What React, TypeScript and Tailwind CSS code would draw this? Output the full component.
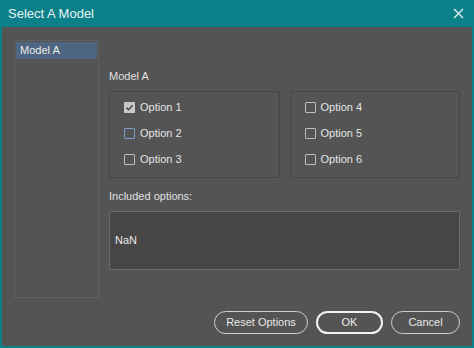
const options = [
  ["Option 1", "Option 2", "Option 3"],
  ["Option 4", "Option 5", "Option 6"],
];

const CheckBox = ({ checked, focused }: { checked?: boolean; focused?: boolean }) => {
  if (checked) {
    return (
      <span className="flex h-[11px] w-[11px] items-center justify-center rounded-[1px] bg-[#c9c9c9]">
        <svg width="9" height="9" viewBox="0 0 9 9">
          <path d="M1.5 4.6 L3.6 6.7 L7.6 2.2" fill="none" stroke="#4a4a4a" strokeWidth="1.6" />
        </svg>
      </span>
    );
  }
  return (
    <span
      className={
        focused
          ? "h-[11px] w-[11px] rounded-[1px] border border-[#7d9ccb]"
          : "h-[11px] w-[11px] rounded-[1px] border border-[#bdbdbd]"
      }
    />
  );
};

const OptionGroup = ({ items }: { items: string[] }) => (
  <div className="flex h-[87px] flex-1 flex-col rounded-[2px] border border-[#464646] px-[14px] pt-[2px]">
    {items.map((label) => (
      <label key={label} className="flex h-[26px] items-center gap-[5px] text-[11px] text-[#e4e4e4]">
        <CheckBox checked={label === "Option 1"} focused={label === "Option 2"} />
        {label}
      </label>
    ))}
  </div>
);

export default function App() {
  return (
    <div
      className="flex h-[348px] w-[474px] flex-col bg-[#0c8088]"
      style={{ fontFamily: '"Liberation Sans", Arial, sans-serif' }}
    >
      <div className="flex h-[27px] shrink-0 items-center justify-between pl-[8px] pr-[10px]">
        <span className="text-[13px] text-[#e6f4f4]">Select A Model</span>
        <svg width="11" height="11" viewBox="0 0 11 11">
          <path d="M1 1 L10 10 M10 1 L1 10" stroke="#e6f4f4" strokeWidth="1.2" />
        </svg>
      </div>

      <div className="mx-[2px] mb-[2px] flex flex-1 flex-col bg-[#545454] px-[12px] pt-[13px]">
        <div className="flex gap-[10px]">
          <div className="h-[258px] w-[85px] shrink-0 border border-[#606060] p-px">
            <div className="flex h-[17px] items-center bg-[#4e6681] pl-[4px] text-[11px] text-[#ececec]">
              Model A
            </div>
          </div>

          <div className="flex flex-1 flex-col pt-[29px]">
            <div className="h-[14px] text-[11px] leading-[14px] text-[#e0e0e0]">Model A</div>
            <div className="mt-[8px] flex gap-[10px]">
              {options.map((group, i) => (
                <OptionGroup key={i} items={group} />
              ))}
            </div>
            <div className="mt-[11px] h-[14px] text-[11px] leading-[14px] text-[#e0e0e0]">
              Included options:
            </div>
            <div className="mt-[8px] flex h-[59px] items-center rounded-[2px] border border-[#6c6c6c] bg-[#464646] pl-[5px] text-[11px] text-[#ececec]">
              NaN
            </div>
          </div>
        </div>

        <div className="mt-[13px] flex justify-end gap-[8px]">
          <button className="h-[23px] w-[94px] rounded-full border-[1.5px] border-[#cfcfcf] text-[11px] text-[#e8e8e8]">
            Reset Options
          </button>
          <button className="h-[23px] w-[67px] rounded-full border-2 border-[#f2f2f2] text-[11px] text-[#f0f0f0]">
            OK
          </button>
          <button className="h-[23px] w-[69px] rounded-full border-[1.5px] border-[#cfcfcf] text-[11px] text-[#e8e8e8]">
            Cancel
          </button>
        </div>
      </div>
    </div>
  );
}
